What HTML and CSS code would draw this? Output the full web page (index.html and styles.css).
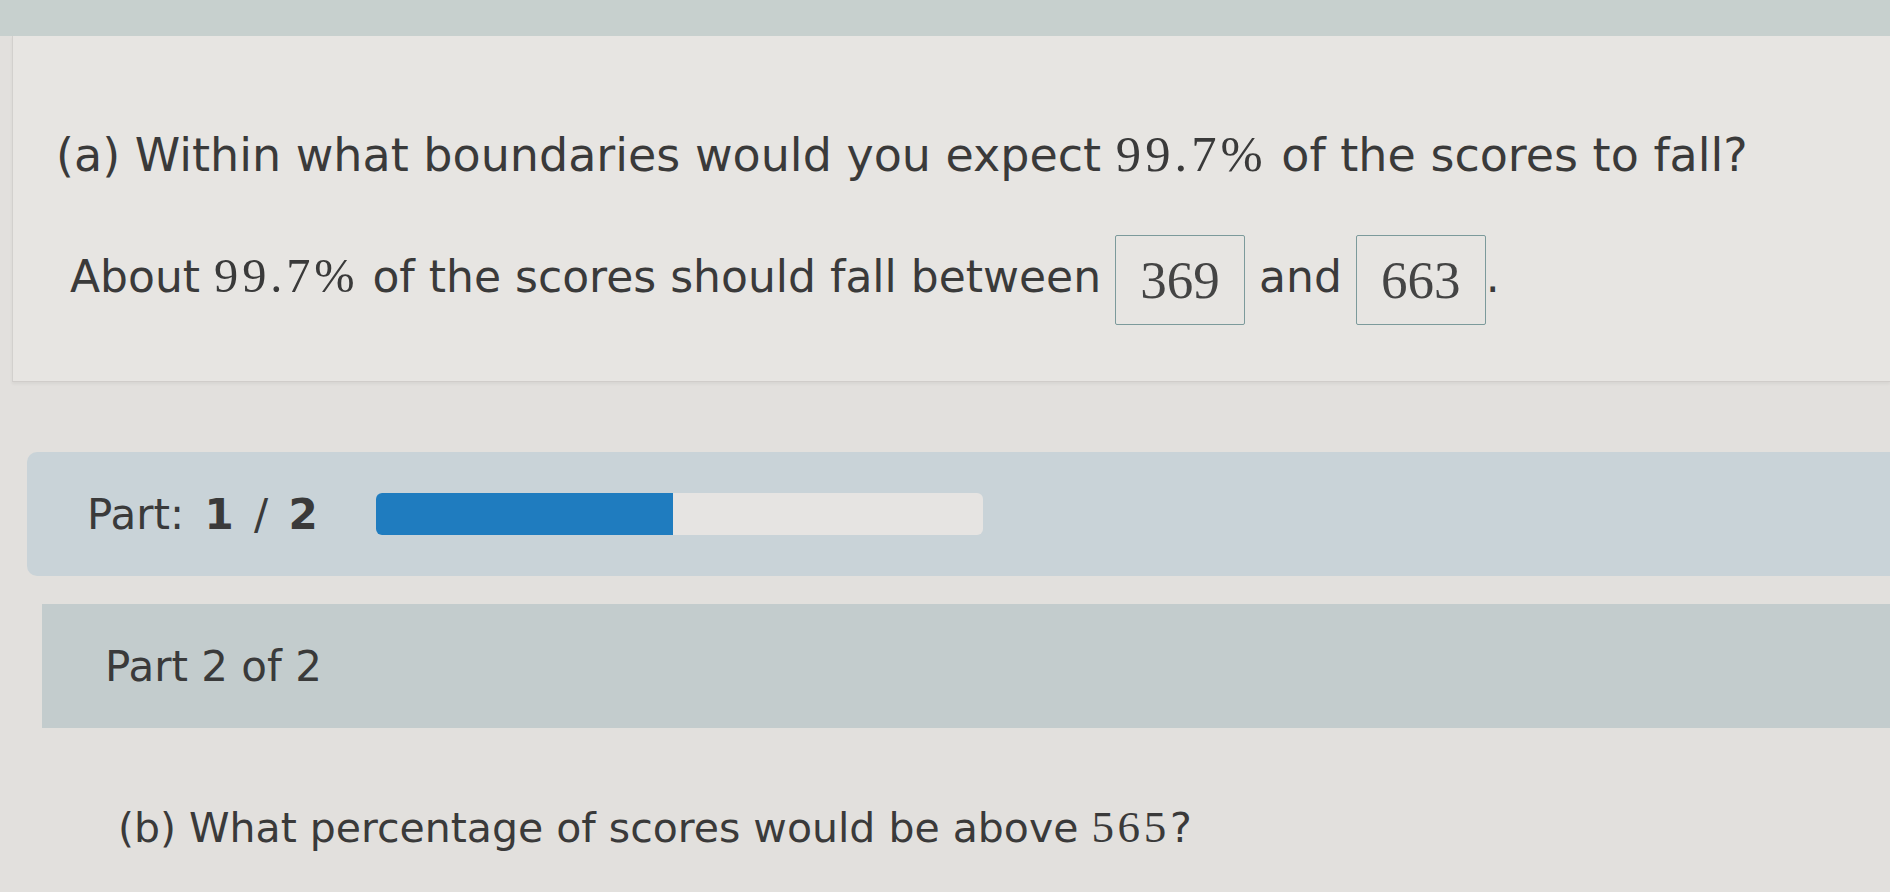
FILE: index.html
```html
<!DOCTYPE html>
<html lang="en">
  <head>
    <meta charset="UTF-8" />
    <meta name="viewport" content="width=device-width, initial-scale=1.0" />
    <title>Question</title>
    <link rel="stylesheet" href="styles.css">
  </head>
  <body>
    <div class="topbar"></div>

    <section class="card">
      <p class="question">
        (a) Within what boundaries would you expect
        <span class="math">99.7%</span> of the scores to fall?
      </p>
      <p class="answer">
        About <span class="math">99.7%</span> of the scores should fall between
        <span class="answer-box">369</span> and
        <span class="answer-box">663</span>.
      </p>
    </section>

    <div class="part-status">
      <span class="part-label">Part: <b>1</b> / <b>2</b></span>
      <div class="progress"><div class="progress-fill" style="width: 49%"></div></div>
    </div>

    <div class="part-head">Part 2 of 2</div>

    <p class="question question-b">
      (b) What percentage of scores would be above <span class="math">565</span>?
    </p>
  </body>
</html>
```

FILE: styles.css
```css
body {
  margin: 0;
  font-family: "DejaVu Sans", Verdana, sans-serif;
  color: #3a3a3a;
  background: #e2e0dd;
  overflow: hidden;
}
.topbar {
  height: 36px;
  background: #c7d0ce;
}
.card {
  box-sizing: border-box;
  height: 346px;
  margin-left: 12px;
  padding: 88px 0 0 43px;
  background: #e7e5e2;
  border-left: 1px solid #d2d0cd;
  border-bottom: 1px solid #d0cdca;
  box-shadow: 0 2px 3px rgba(0, 0, 0, 0.05);
}
.question {
  margin: 0;
  font-size: 46px;
  line-height: 1.2;
  white-space: nowrap;
}
.answer {
  margin: 50px 0 0 14px;
  font-size: 44px;
  white-space: nowrap;
}
.math {
  font-family: "Liberation Serif", "Times New Roman", serif;
  font-size: 1.1em;
  letter-spacing: 0.08em;
}
.answer-box {
  display: inline-block;
  vertical-align: middle;
  box-sizing: border-box;
  width: 130px;
  height: 90px;
  line-height: 88px;
  text-align: center;
  border: 1px solid #7c9a9b;
  border-radius: 2px;
  font-family: "Liberation Serif", "Times New Roman", serif;
  font-size: 53px;
  color: #444;
}
.part-status {
  display: flex;
  align-items: center;
  gap: 58px;
  height: 124px;
  margin: 70px 0 0 27px;
  padding-left: 60px;
  background: #c9d3d8;
  border-radius: 10px 0 0 10px;
}
.part-label {
  font-size: 42px;
  word-spacing: 7px;
}
.progress {
  width: 607px;
  height: 42px;
  background: #e6e4e2;
  border-radius: 6px;
  overflow: hidden;
}
.progress-fill {
  height: 100%;
  background: #1f7cbf;
}
.part-head {
  display: flex;
  align-items: center;
  height: 124px;
  margin: 28px 0 0 42px;
  padding-left: 63px;
  background: #c3cccd;
  font-size: 42px;
}
.question-b {
  margin: 72px 0 0 118px;
  font-size: 41px;
}
```
